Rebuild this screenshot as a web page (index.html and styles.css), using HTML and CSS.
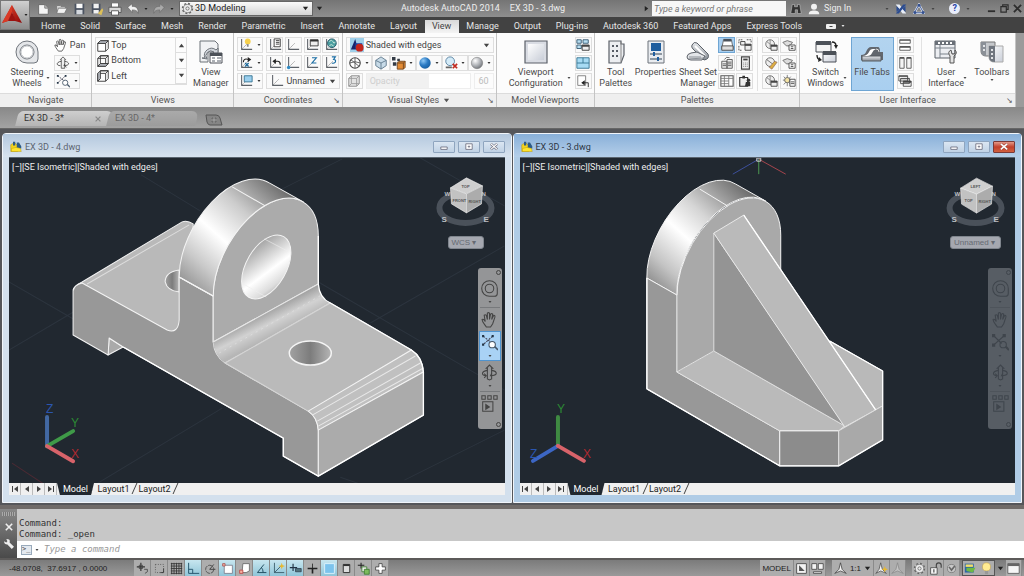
FILE: index.html
```html
<!DOCTYPE html>
<html lang="en">
  <head>
    <meta charset="UTF-8" />
    <meta name="viewport" content="width=device-width, initial-scale=1.0" />
    <title>Autodesk AutoCAD 2014 - EX 3D - 3.dwg</title>
    <link rel="stylesheet" href="styles.css">
  </head>

  <body>
    <!-- icon sprite -->
    <svg class="sprite" aria-hidden="true">
      <defs>
        <linearGradient id="red" x1="0" y1="0" x2="1" y2="1"><stop offset="0" stop-color="#e8472f" /><stop offset="1" stop-color="#8e0a0a" /></linearGradient>
        <linearGradient id="pane" x1="0" y1="0" x2="1" y2="1"><stop offset="0" stop-color="#fff" /><stop offset="1" stop-color="#c9ced8" /></linearGradient>
        <linearGradient id="metal" x1="0" y1="0" x2="0" y2="1"><stop offset="0" stop-color="#e9ebee" /><stop offset="1" stop-color="#858b93" /></linearGradient>
        <radialGradient id="blueball" cx=".35" cy=".3" r=".8"><stop offset="0" stop-color="#8fc8f5" /><stop offset=".5" stop-color="#2b7bc4" /><stop offset="1" stop-color="#155a9c" /></radialGradient>
        <radialGradient id="greyball" cx=".35" cy=".3" r=".8"><stop offset="0" stop-color="#fff" /><stop offset=".6" stop-color="#a5a8ad" /><stop offset="1" stop-color="#66696e" /></radialGradient>
      </defs>
      <symbol id="new" viewBox="0 0 16 16"><path d="M3 3h7l4 4v7H3z" fill="#f4f4f4" stroke="#666" /><path d="M10 3v4h4" fill="#bbb" stroke="#777" /></symbol>
      <symbol id="open" viewBox="0 0 16 16"><path d="M3 12V4h4l1 1h5v2" fill="#d5d5d5" stroke="#777" /><path d="M3 13l2-6h10l-3 6z" fill="#f2f2f2" stroke="#777" /></symbol>
      <symbol id="save" viewBox="0 0 16 16"><path d="M3 2h11v12H3z" fill="#4b5361" /><path d="M5 2h7v5H5z" fill="#fafafa" /><path d="M5 9h7v5H5z" fill="#d4d8de" /></symbol>
      <symbol id="saveas" viewBox="0 0 16 16"><path d="M2 2h10v11H2z" fill="#4b5361" /><path d="M4 2h6v5H4zM4 9h6v4H4z" fill="#f1f1f1" /><path d="M14 7l-5 6 4 2 2-6z" fill="#ddc058" /></symbol>
      <symbol id="print" viewBox="0 0 16 16"><path d="M4 1h8v5H4z" fill="#fff" stroke="#666" /><path d="M1 6h14v6H1z" fill="#d9d9d9" stroke="#555" /><path d="M4 10h8v5H4z" fill="#fff" stroke="#555" /></symbol>
      <symbol id="undo" viewBox="0 0 16 16"><path d="M2 6l5-4v3c5 0 7 2 7 8-1-3-3-4-7-4v3z" fill="#f0f0f0" stroke="#555" stroke-width=".6" /></symbol>
      <symbol id="redo" viewBox="0 0 16 16"><path d="M14 6L9 2v3c-5 0-7 2-7 8 1-3 3-4 7-4v3z" fill="#aaa" stroke="#666" stroke-width=".6" /></symbol>
      <symbol id="gear" viewBox="0 0 16 16"><circle cx="8" cy="8" r="6" fill="#eee" stroke="#666" stroke-width="2" stroke-dasharray="2.4 2.3" /><circle cx="8" cy="8" r="5" fill="#eee" stroke="#777" /><circle cx="8" cy="8" r="2" fill="none" stroke="#666" /></symbol>
      <symbol id="arrow" viewBox="0 0 8 8"><path d="M1 2h6L4 6z" fill="currentColor" /></symbol>
      <symbol id="binoc" viewBox="0 0 16 16"><path d="M3 2h3v3h4V2h3l2 12h-5V9H7v5H1z" fill="#333" stroke="#ccc" stroke-width=".7" /></symbol>
      <symbol id="person" viewBox="0 0 16 16"><circle cx="8" cy="5" r="4" fill="#f1f1f1" /><path d="M1 15c0-4 3-5 7-5s7 1 7 5z" fill="#f1f1f1" /></symbol>
      <symbol id="exchange" viewBox="0 0 16 16"><path d="M1 2h5l9 12h-5z" fill="#e8eef8" /><path d="M15 2h-4L1 14h4z" fill="#2a4c92" /><path d="M2 4l4 4-4 4z" fill="#2a4c92" /><path d="M14 4l-4 4 4 4z" fill="#2a4c92" /></symbol>
      <symbol id="a360" viewBox="0 0 16 16"><path d="M8 2L2 13h12z" fill="none" stroke="#e3e9f5" stroke-width="3" /><path d="M8 2L2 13h12z" fill="none" stroke="#34508f" stroke-width="1.2" /><g fill="#34508f"><circle cx="8" cy="3" r="2" /><circle cx="2.500" cy="12.500" r="2" /><circle cx="13.500" cy="12.500" r="2" /></g></symbol>
      <symbol id="min" viewBox="0 0 10 10"><path d="M1 7h8v2H1z" fill="currentColor" /></symbol>
      <symbol id="restore" viewBox="0 0 10 10"><path d="M3 3V1h6v5H7M1 3h6v6H1z" fill="none" stroke="currentColor" stroke-width="1.3" /></symbol>
      <symbol id="close" viewBox="0 0 10 10"><path d="M1 1l8 8M9 1L1 9" stroke="currentColor" stroke-width="2" /></symbol>

      <symbol id="wheel" viewBox="0 0 24 24"><path d="M12 1a11 11 0 0 0 0 22h7q4 0 4-4v-7A11 11 0 0 0 12 1z" fill="#e4e6e9" stroke="#71767d" /><circle cx="12" cy="12" r="7" fill="#f7f7f7" stroke="#71767d" /><circle cx="12" cy="12" r="6" fill="#fff" stroke="#c4c7cb" /></symbol>
      <symbol id="hand" viewBox="0 0 16 16"><path d="M5 15C3 12 1 10 1 8q1.500-1 3 2L3 4q1-1 2 0l1 4V2q1-1 2 0v6l1-5q1-1 2 0l-1 5 2-4q1.500 0 1 2l-2 6-2 3z" fill="#fff" fill-opacity=".7" stroke="#444" stroke-width=".9" /></symbol>
      <symbol id="orbit" viewBox="0 0 16 16"><path d="M6 14V4H5l3-3 3 3h-1v10z" fill="#eee" stroke="#444" stroke-width=".9" /><path d="M6 6C0 7 0 11 5 11M10 6c6 1 6 5-1 5l1-2M10 11l2 2" fill="none" stroke="#444" /></symbol>
      <symbol id="zoomx" viewBox="0 0 16 16"><path d="M2 2l10 8M11 2L2 10" stroke="#445" stroke-dasharray="2 1" /><g fill="#234"><path d="M1 1h2v2H1zM10 1h2v2h-2zM1 9h2v2H1z" /></g><circle cx="10.500" cy="10" r="3" fill="#fff" stroke="#456" /><path d="M13 12l3 3" stroke="#456" stroke-width="1.500" /></symbol>

      <!-- outline versions for the navigation bar -->
      <symbol id="n-wheel" viewBox="0 0 24 24"><path d="M12 1a11 11 0 0 0 0 22h7q4 0 4-4v-7A11 11 0 0 0 12 1z" fill="none" stroke="currentColor" stroke-width="1.500" /><circle cx="12" cy="12" r="6" fill="none" stroke="currentColor" stroke-width="1.500" /></symbol>
      <symbol id="n-hand" viewBox="0 0 16 16"><path d="M5 15C3 12 1 10 1 8q1.500-1 3 2L3 4q1-1 2 0l1 4V2q1-1 2 0v6l1-5q1-1 2 0l-1 5 2-4q1.500 0 1 2l-2 6-2 3z" fill="none" stroke="currentColor" /></symbol>
      <symbol id="n-orbit" viewBox="0 0 16 16"><path d="M6 14V4H5l3-3 3 3h-1v10l-2 1z" fill="none" stroke="currentColor" /><path d="M6 6C0 7 0 11 5 11M10 6c6 1 6 5-1 5l1-2M3 9l2 2-2 2" fill="none" stroke="currentColor" /></symbol>
      <symbol id="n-zoom" viewBox="0 0 16 16"><path d="M2 2l7 7M11 2L2 10" fill="none" stroke="currentColor" stroke-width="1.200" /><path d="M0 0h3v3H0zM10 0h3v3h-3zM0 9h3v3H0z" fill="currentColor" /><circle cx="10.500" cy="10" r="3" fill="none" stroke="currentColor" /><path d="M13 12l3 3" stroke="currentColor" stroke-width="2" /></symbol>

      <symbol id="cube-t" viewBox="0 0 16 16"><path d="M2 5h9v9H2zM5 2h9v9l-3 3M2 5l3-3M11 5l3-3" fill="#fff" stroke="#333" /><path d="M2 5l3-3h9l-3 3z" fill="#b9bdc4" stroke="#333" /></symbol>
      <symbol id="cube-b" viewBox="0 0 16 16"><path d="M2 5h9v9H2zM5 2h9v9l-3 3M2 5l3-3h9l-3 3M5 2v9h9M5 11l-3 3" fill="none" stroke="#333" /><path d="M2 14l3-3h9l-3 3z" fill="#b9bdc4" stroke="#333" /></symbol>
      <symbol id="cube-l" viewBox="0 0 16 16"><path d="M2 5h9v9H2zM5 2h9v9l-3 3M11 5l3-3H5" fill="none" stroke="#333" /><path d="M2 5l3-3v9l-3 3z" fill="#b9bdc4" stroke="#333" /></symbol>
      <symbol id="viewmgr" viewBox="0 0 24 24"><path d="M1 1h15l3 3v8H9v10H1z" fill="#f1f2f4" stroke="#6d7279" /><path d="M3 18h3a7 7 0 0 1 11-8l2-2v7l-6-1 2-2a5 5 0 0 0-7 7z" fill="#d0d4da" stroke="#6d7279" /><path d="M11 13h12v10H11z" fill="#fff" stroke="#4c5158" /><path d="M11 13h12v3H11z" fill="#4c5158" /><path d="M13 18h3M18 18h4M13 21h3M18 21h4" stroke="#59606a" /></symbol>
      <symbol id="ucs" viewBox="0 0 16 16"><path d="M3 1v12h12" fill="none" stroke="#5d6268" stroke-width="1.200" /><path d="M3 13l7-7" stroke="#888" stroke-dasharray="2 1" /></symbol>
      <symbol id="ucs-bulb" viewBox="0 0 16 16"><use href="#ucs" /><circle cx="10" cy="4" r="3.300" fill="#f6d04c" /><path d="M9 7h2v3H9z" fill="#888" /></symbol>
      <symbol id="ucs-rot" viewBox="0 0 16 16"><use href="#ucs" /><path d="M5 7c0-4 3-4 6-3" fill="none" stroke="#222" stroke-width="1.300" /><path d="M10 1l4 3-4 3z" fill="#222" /><path d="M7 8l4 4M11 8l-4 4" stroke="#1f6b9b" stroke-width="1.500" /></symbol>
      <symbol id="ucs-view" viewBox="0 0 16 16"><use href="#ucs" /><path d="M6 2h9v7H6z" fill="#9bd0ef" stroke="#31708f" /></symbol>
      <symbol id="ucs-list" viewBox="0 0 16 16"><use href="#ucs" /><path d="M7 1h7v9H7z" fill="#fff" stroke="#333" /><path d="M9 3h4M9 5h4M9 7h4" stroke="#333" /></symbol>
      <symbol id="ucs-back" viewBox="0 0 16 16"><use href="#ucs" /><path d="M8 6h3q3 0 3 4" fill="none" stroke="#222" stroke-width="1.400" /><path d="M9 3L5 6l4 3z" fill="#222" /></symbol>
      <symbol id="ucs-named" viewBox="0 0 16 16"><use href="#ucs" /><path d="M6 2h9v7H6z" fill="#eee" stroke="#333" /><path d="M6 2h9v2H6z" fill="#333" /></symbol>
      <symbol id="ucs-world" viewBox="0 0 16 16"><use href="#ucs" /><circle cx="9" cy="6" r="5" fill="#4a9ea0" stroke="#256" /><path d="M6 4q3-3 4 0t3 1M6 9q2-3 5 0" fill="none" stroke="#d8efe0" /></symbol>
      <symbol id="ucs-orig" viewBox="0 0 16 16"><use href="#ucs" /><circle cx="3" cy="13" r="2" fill="#318bc4" /></symbol>
      <symbol id="ucs-z" viewBox="0 0 16 16"><use href="#ucs" /><path d="M8 2h5L8 8h5" fill="none" stroke="#1c6fa5" stroke-width="1.300" /></symbol>
      <symbol id="ucs-3" viewBox="0 0 16 16"><use href="#ucs" /><path d="M9 1h4l-2 3q3 0 2 3-2 2-4 1" fill="none" stroke="#1c6fa5" stroke-width="1.300" /></symbol>
      <symbol id="shaded" viewBox="0 0 16 16"><path d="M0 0h16v16H0z" fill="#9fd0ea" /><path d="M1 13L6 1l3 12z" fill="#16246b" /><path d="M6 6h8v6H6z" fill="#1c3e9c" /><circle cx="11" cy="11" r="4.500" fill="#c3241c" /></symbol>
      <symbol id="wire" viewBox="0 0 16 16"><circle cx="8" cy="8" r="6" fill="#fff" stroke="#444" stroke-width="1.200" /><path d="M3 4l10 8M8 2v12M2 8q6-3 12 0" fill="none" stroke="#555" /></symbol>
      <symbol id="cubeico" viewBox="0 0 16 16"><path d="M8 1l6 4v6l-6 4-6-4V5z" fill="#c8dbe8" stroke="#5d7689" /><path d="M2 5l6 3 6-3M8 8v7" fill="none" stroke="#5d7689" /></symbol>
      <symbol id="material" viewBox="0 0 16 16"><path d="M0 1h4v4H0zM6 3h3v3H6zM1 7h4v4H1z" fill="#333b46" /><path d="M6 8l2-2h7v7l-2 2H6z" fill="#e38b34" stroke="#70441b" /><path d="M6 8h7v7M13 8l2-2" fill="none" stroke="#70441b" /></symbol>
      <symbol id="ball" viewBox="0 0 16 16"><circle cx="8" cy="8" r="6.500" fill="url(#blueball)" /></symbol>
      <symbol id="ballx" viewBox="0 0 16 16"><circle cx="7" cy="6" r="5" fill="#d4ebf8" stroke="#527d9c" /><path d="M2 13h7" stroke="#666" stroke-width="2" /><path d="M10 9l5 5M15 9l-5 5" stroke="#c22b20" stroke-width="2" /></symbol>
      <symbol id="greyb" viewBox="0 0 16 16"><circle cx="8" cy="8" r="6.500" fill="url(#greyball)" stroke="#777" stroke-width=".6" /></symbol>
      <symbol id="xray" viewBox="0 0 16 16"><path d="M2 5l3-3h9v9l-3 3H2z" fill="#e3e3e3" stroke="#888" /><path d="M2 5h9v9M11 5l3-3M5 2v9h9M5 11l-3 3" fill="none" stroke="#999" /></symbol>
      <symbol id="vport" viewBox="0 0 24 24"><path d="M1 1h22v22H1z" fill="#d9dce3" stroke="#5a5f68" stroke-width="1.200" /><path d="M4 4h16v16H4z" fill="url(#pane)" /></symbol>
      <symbol id="vp-named" viewBox="0 0 16 16"><path d="M1 2h5v4H1zM8 2h6v4H8zM1 8h5v4H1z" fill="#b9dff2" stroke="#31556d" /><path d="M7 8h8v6H7z" fill="#eee" stroke="#333" /><path d="M7 8h8v2H7z" fill="#444" /></symbol>
      <symbol id="vp-join" viewBox="0 0 16 16"><path d="M1 2h14v12H1z" fill="#a7dbf4" stroke="#31708f" /><path d="M1 8h14M8 2v6" stroke="#31708f" /></symbol>
      <symbol id="vp-rest" viewBox="0 0 16 16"><path d="M2 2h9v11H2z" fill="#fff" stroke="#777" /><path d="M14 15v-5H9" fill="none" stroke="#222" /><path d="M10 7l-4 3 4 3z" fill="#222" /></symbol>
      <symbol id="toolpal" viewBox="0 0 24 24"><path d="M5 1h12v3h3v11l-3 8H5z" fill="#eceef1" stroke="#5b6068" stroke-width="1.200" /><path d="M17 2v20" stroke="#888" /><path d="M8 5h2v2H8zM12 5h2v2h-2zM8 10h2v2H8zM12 10h2v2h-2zM8 15h2v2H8zM12 15h2v2h-2z" fill="#565c65" /></symbol>
      <symbol id="props" viewBox="0 0 24 24"><path d="M4 1h16v22H4z" fill="#e9ecf0" stroke="#6c727b" /><path d="M7 3h10v8H7z" fill="#1f5e9e" /><path d="M6 14h12M6 19h12" stroke="#345" /><path d="M9 12h2v4H9zM13 17h2v4h-2z" fill="#1f5e9e" /></symbol>
      <symbol id="sheet" viewBox="0 0 24 24"><path d="M6 5q2-4 5-2l11 11q2 5-4 6L7 9q-2-2-1-4z" fill="url(#metal)" stroke="#5c6168" /><path d="M9 6l10 10" stroke="#fff" stroke-width="2" /><path d="M1 17q0-3 4-4l6-1 8 4-3 4H5q-4 0-4-3z" fill="#e4e6e9" stroke="#5c6168" /><path d="M3 17h12M2 19l16-1" stroke="#8b9096" /></symbol>
      <symbol id="win" viewBox="0 0 16 16"><path d="M4 2h9l2 10H2z" fill="#fff" stroke="#666" /><path d="M4 1h9v3H4z" fill="#4b5159" /><path d="M2 9h13v5H2z" fill="#ddd" stroke="#444" /></symbol>
      <symbol id="dcenter" viewBox="0 0 16 16"><path d="M1 6V2h5M10 2h5v3M1 9v5h4" fill="none" stroke="#444" stroke-dasharray="2 1" /><path d="M3 4h5v4H3zM8 7h7v7H8z" fill="#eee" stroke="#444" /><path d="M8 7h7v2H8z" fill="#444" /></symbol>
      <symbol id="docs" viewBox="0 0 16 16"><path d="M2 6h6v8H2zM8 4h6v10H8z" fill="#eee" stroke="#555" /><path d="M9 7h4M9 9h4M9 11h4M3 9h4M3 11h4M5 4q2-4 6-2" fill="none" stroke="#555" /></symbol>
      <symbol id="calc" viewBox="0 0 16 16"><path d="M4 1h9v14H4z" fill="#eee" stroke="#444" stroke-width="1.300" /><path d="M6 4h5" stroke="#444" stroke-width="2" /><path d="M6 8h5M6 10h5M6 12h5" stroke="#777" stroke-dasharray="1 1" /></symbol>
      <symbol id="table" viewBox="0 0 16 16"><path d="M1 2h14v12H1z" fill="#fff" stroke="#555" stroke-width="1.200" /><path d="M1 5h14M1 8h9M1 11h9M5 2v12M10 2v12" stroke="#777" /></symbol>
      <symbol id="markup" viewBox="0 0 16 16"><path d="M2 4h9v10H2z" fill="#eee" stroke="#333" stroke-width="1.300" /><path d="M5 2h3v3H5zM9 9h5v5H8z" fill="#333" /><circle cx="12" cy="7" r="2" fill="#333" /></symbol>
      <symbol id="light" viewBox="0 0 16 16"><circle cx="7" cy="7" r="5" fill="#eee" stroke="#666" /><path d="M3 4l8 6M7 2v9" stroke="#888" /><path d="M8 8h7v6H8z" fill="#eee" stroke="#444" /><path d="M8 8h7v2H8z" fill="#444" /></symbol>
      <symbol id="lamp" viewBox="0 0 16 16"><path d="M1 5l5-2 6 2-3 4H5z" fill="#ddd" stroke="#666" /><path d="M8 8h7v6H8z" fill="#fff" stroke="#444" /><path d="M10 10h3M10 12h3" stroke="#444" /></symbol>
      <symbol id="brush" viewBox="0 0 16 16"><circle cx="7" cy="7" r="5" fill="#eee" stroke="#666" /><path d="M3 4l8 6" stroke="#666" /><path d="M15 7l-6 8-3-2 6-7z" fill="#dcae44" stroke="#755" stroke-width=".6" /></symbol>
      <symbol id="sun" viewBox="0 0 16 16"><path d="M6 1v13M1 7h11M2 3l8 9M10 3l-8 9" stroke="#777" /><circle cx="6" cy="7" r="3" fill="#f4e3a4" stroke="#666" /><path d="M9 6h6v8H9z" fill="#fff" stroke="#444" /><path d="M10 9h4M10 11h4" stroke="#444" /></symbol>
      <symbol id="switchw" viewBox="0 0 24 24"><path d="M2 2h15v10H2z" fill="#f4f4f4" stroke="#4c5158" /><path d="M2 1h15v4H2z" fill="#4c5158" /><path d="M9 12h13v10H9z" fill="url(#pane)" stroke="#4c5158" /><path d="M9 11h13v4H9z" fill="#4c5158" /><path d="M18 2q4 0 4 4M3 15q0 4 3 5" fill="none" stroke="#222" stroke-width="1.300" /><path d="M20 5h4l-2 4zM5 17l3 3-4 2z" fill="#222" /></symbol>
      <symbol id="filetabs" viewBox="0 0 24 24"><path d="M1 20v-5q4 0 5-3 2-5 5-5h7q2 0 2 5h3v8z" fill="#62676e" /><path d="M2 21v-5h19v5z" fill="url(#metal)" stroke="#555a61" /><path d="M2 16q5 0 7-4 1-3 4-3h3q-3 1-4 4-1 3-5 3z" fill="#fff" /><path d="M16 9q3 0 3 3" fill="none" stroke="#ddd" /></symbol>
      <symbol id="tileh" viewBox="0 0 16 16"><path d="M2 2h12v4H2zM2 10h12v4H2z" fill="#fff" stroke="#555" /><path d="M2 2h12v1H2zM2 9h12v2H2z" fill="#555" /></symbol>
      <symbol id="tilev" viewBox="0 0 16 16"><path d="M2 2h5v12H2zM10 2h5v12h-5z" fill="#f4f4f4" stroke="#555" /><path d="M2 1h5v2H2zM10 1h5v2h-5z" fill="#555" /></symbol>
      <symbol id="cascade" viewBox="0 0 16 16"><path d="M1 2h10v6H1zM3 5h10v6H3zM6 8h9v6H6z" fill="#fff" stroke="#444" /><path d="M1 2h10v1H1zM3 5h10v1H3zM6 8h9v2H6z" fill="#444" /></symbol>
      <symbol id="ui" viewBox="0 0 24 24"><path d="M1 1h20v17H1z" fill="#eceef2" stroke="#5b6068" /><path d="M1 1h20v4H1z" fill="#6a7078" /><path d="M4 3h2M8 3h2M12 3h2M16 3h2" stroke="#fff" stroke-width="2" /><path d="M1 8h20M6 5v13M6 14h15" stroke="#7b828b" /><path d="M17 10q-4 2-1 6v7h4v-7q4-3 1-6v4h-3z" fill="#e4e4e4" stroke="#555" /></symbol>
      <symbol id="toolbars" viewBox="0 0 24 24"><path d="M1 2h14v14H6q-5 0-5-5z" fill="#c5c8cc" stroke="#777" /><path d="M1 2h5v14q-5 0-5-5z" fill="#8b9097" /><path d="M9 6h14v16H14q-5 0-5-5z" fill="url(#pane)" stroke="#aaa" /><path d="M9 6h6v16q-6 0-6-5z" fill="#70767f" /><path d="M11 9h2v2h-2zM11 13h2v2h-2zM11 17h2v2h-2zM3 5h2v2H3zM3 9h2v2H3z" fill="#e1e3e6" /></symbol>
      <symbol id="dwg" viewBox="0 0 16 16"><path d="M1 5l5-3 4 4v8H1z" fill="#f4d31d" stroke="#a98a0c" stroke-width=".6" /><path d="M4 1h3v5H4zM9 2h3l3 5v3H9z" fill="#2c5a86" /><path d="M2 10q6-3 12 0l1 4H2z" fill="#ffe42e" stroke="#b4960f" stroke-width=".6" /></symbol>
      <symbol id="motion" viewBox="0 0 20 20"><path d="M1 1h4v4H1zM8 1h4v4H8zM15 1h4v4h-4zM2 8h12v11H2z" fill="none" stroke="currentColor" stroke-width="1.200" /><path d="M5 10l6 4-6 4z" fill="currentColor" /></symbol>
      <symbol id="wrench" viewBox="0 0 10 10"><path d="M1 3l2 1 1-1-1-2q4 0 3 3l4 4-2 2-4-4q-3 0-3-3z" fill="#eee" /></symbol>

      <symbol id="s-infer" viewBox="0 0 16 16"><path d="M6 1v10M1 6h10" stroke="#333" stroke-width="1.400" /><path d="M4 4h4v4H4zM10 9h4v3l-3 2" fill="none" stroke="#444" /></symbol>
      <symbol id="s-snap" viewBox="0 0 16 16"><path d="M3 3h10v10H3z" fill="none" stroke="#444" stroke-dasharray="1 2" /><path d="M9 13h4V8" stroke="#333" fill="none" /></symbol>
      <symbol id="s-grid" viewBox="0 0 16 16"><path d="M1 2h14M1 5h14M1 8h14M1 11h14M1 14h14M2 1v14M5 1v14M8 1v14M11 1v14M14 1v14" stroke="#333" /></symbol>
      <symbol id="s-ortho" viewBox="0 0 16 16"><path d="M2 1v13h13M2 9h5v5" fill="none" stroke="#27566d" stroke-width="1.200" /></symbol>
      <symbol id="s-polar" viewBox="0 0 16 16"><circle cx="7" cy="9" r="5" fill="none" stroke="#555" stroke-width="1.200" stroke-dasharray="6 1" /><path d="M7 9h7M7 9l5-6" stroke="#444" stroke-width="1.200" /></symbol>
      <symbol id="s-osnap" viewBox="0 0 16 16"><path d="M4 4h10v10H4z" fill="#fff" stroke="#778" /><path d="M2 2h3v3H2z" fill="#f5b2a2" stroke="#a55" /></symbol>
      <symbol id="s-3dosnap" viewBox="0 0 16 16"><path d="M6 2h8v9l-4 2H5z" fill="#fff" stroke="#666" /><path d="M2 10h4v4H2z" fill="#f5b2a2" stroke="#b44" /></symbol>
      <symbol id="s-otrack" viewBox="0 0 16 16"><path d="M11 3L3 13h11M8 7q2 2 2 6" fill="none" stroke="#234f63" stroke-width="1.200" /></symbol>
      <symbol id="s-ducs" viewBox="0 0 16 16"><path d="M3 1v12h12M3 13l8-8" fill="none" stroke="#30515f" /><path d="M12 1l1 3 3 1-3 1-1 3-1-3-3-1 3-1z" fill="#e9b92d" /></symbol>
      <symbol id="s-dyn" viewBox="0 0 16 16"><path d="M5 2v9M1 7h9" stroke="#234" stroke-width="1.400" /><path d="M8 8h7v4H8z" fill="#52747d" stroke="#345" /></symbol>
      <symbol id="s-lwt" viewBox="0 0 16 16"><path d="M8 2v6" stroke="#222" /><path d="M2 8h12M8 8v6" stroke="#222" stroke-width="2" /></symbol>
      <symbol id="s-tpy" viewBox="0 0 16 16"><path d="M2 2h12v12H2z" fill="#7cc3ec" stroke="#e6f6ff" /></symbol>
      <symbol id="s-qp" viewBox="0 0 16 16"><path d="M4 3h8v10H4z" fill="#ddd" stroke="#333" stroke-width="1.200" /><path d="M4 4h8" stroke="#333" stroke-width="2" /></symbol>
      <symbol id="s-sc" viewBox="0 0 16 16"><path d="M1 4h8M5 1v7" stroke="#222" stroke-width="1.300" /><path d="M6 6h6v6H6z" fill="#eee" stroke="#3a7d2c" /><path d="M9 9h6v6H9z" fill="#7dbb5d" stroke="#3a7d2c" /></symbol>
      <symbol id="s-am" viewBox="0 0 16 16"><path d="M6 2h4v4h4v4h-4v4H6v-4H2V6h4z" fill="#fff" stroke="#444" /></symbol>
      <symbol id="s-paper" viewBox="0 0 16 16"><path d="M2 2h12v12H2z" fill="#f4f4f4" stroke="#555" stroke-width="1.200" /><path d="M5 4v7h7z" fill="#555" /></symbol>
      <symbol id="s-qv" viewBox="0 0 16 16"><path d="M1 2h6v7H1zM9 2h6v7H9zM3 12h10v2H3z" fill="#f4f4f4" stroke="#444" /></symbol>
      <symbol id="s-anno" viewBox="0 0 16 16"><path d="M8 1l2 8 5 5-7-3-7 3 5-5z" fill="#f5f5f5" stroke="#444" /></symbol>
      <symbol id="s-annostar" viewBox="0 0 16 16"><path d="M7 1l2 8 5 5-7-3-6 3 4-5z" fill="#f5f5f5" stroke="#555" /><path d="M12 5l1 3 3 1-3 1-1 3-1-3-3-1 3-1z" fill="#e9b92d" /></symbol>
      <symbol id="s-annooff" viewBox="0 0 16 16"><path d="M8 1l2 8 5 5-7-3-7 3 5-5z" fill="#c4c4c4" stroke="#8a8a8a" /></symbol>
      <symbol id="s-lock" viewBox="0 0 16 16"><path d="M2 7h8v8H2z" fill="#f4f4f4" stroke="#444" /><path d="M9 7V4q0-3 3-3t3 3v3M6 9v4" fill="none" stroke="#444" stroke-width="1.400" /></symbol>
      <symbol id="s-hw" viewBox="0 0 16 16"><circle cx="8" cy="8" r="5" fill="#c9c9c9" stroke="#777" /><path d="M5 6l3 4 4-5" fill="none" stroke="#666" stroke-width="2" /></symbol>
      <symbol id="s-iso" viewBox="0 0 16 16"><path d="M1 2h11v11H1z" fill="#2d67a5" /><path d="M3 7h11l-3 6-8-2z" fill="#6dba45" /><path d="M2 3h9v3H2z" fill="#f6df67" /></symbol>
      <symbol id="s-bulb" viewBox="0 0 16 16"><circle cx="8" cy="6" r="5" fill="#ffeb92" stroke="#bb9840" stroke-width=".6" /><path d="M6 11h4v4H6z" fill="#999" /></symbol>
      <symbol id="s-clean" viewBox="0 0 16 16"><path d="M1 2h14v12H1z" fill="#f6f6f6" stroke="#555" /><path d="M1 2h14v3H1z" fill="#666" /></symbol>
    </svg>

    <header class="top">
      <button class="app-btn" aria-label="Application menu">
        <svg class="app-logo" viewBox="0 0 20 20"><path d="M10 0l10 18-7-2-3-9-4 9-6 2z" fill="url(#red)" /><path d="M10 0v8l-4 8-6 2z" fill="#d93a26" /><path d="M10 7l4 9H6z" fill="#9c1210" /></svg>
        <svg class="tiny"><use href="#arrow" /></svg>
      </button>
      <div class="titlebar">
        <div class="qat">
          <button aria-label="New"><svg><use href="#new" /></svg></button>
          <button aria-label="Open"><svg><use href="#open" /></svg></button>
          <button aria-label="Save"><svg><use href="#save" /></svg></button>
          <button aria-label="Save As"><svg><use href="#saveas" /></svg></button>
          <button aria-label="Plot"><svg><use href="#print" /></svg></button>
          <button aria-label="Undo"><svg><use href="#undo" /></svg></button>
          <svg class="tiny"><use href="#arrow" /></svg>
          <button aria-label="Redo"><svg><use href="#redo" /></svg></button>
          <svg class="tiny"><use href="#arrow" /></svg>
        </div>
        <div class="workspace-pick">
          <svg class="ico"><use href="#gear" /></svg>
          <select aria-label="Workspace"><option>3D Modeling</option></select>
          <svg class="caret"><use href="#arrow" /></svg>
        </div>
        <svg class="caret"><use href="#arrow" /></svg>
        <div class="app-title"><span>Autodesk AutoCAD 2014</span><span>EX 3D - 3.dwg</span></div>
        <svg class="caret side"><use href="#arrow" /></svg>
        <input class="search" type="text" aria-label="Search help" placeholder="Type a keyword or phrase" />
        <div class="info">
          <button aria-label="Search"><svg><use href="#binoc" /></svg></button>
          <button class="signin"><svg><use href="#person" /></svg>Sign In</button>
          <svg class="tiny"><use href="#arrow" /></svg>
          <button aria-label="Exchange"><svg><use href="#exchange" /></svg></button>
          <button aria-label="Autodesk 360"><svg><use href="#a360" /></svg></button>
          <svg class="tiny"><use href="#arrow" /></svg>
          <button class="help">?</button>
          <svg class="tiny"><use href="#arrow" /></svg>
        </div>
        <div class="sys">
          <button aria-label="Minimize"><svg><use href="#min" /></svg></button>
          <button aria-label="Restore"><svg><use href="#restore" /></svg></button>
          <button aria-label="Close"><svg><use href="#close" /></svg></button>
        </div>
      </div>
      <nav class="menu">
        <button>Home</button>
        <button>Solid</button>
        <button>Surface</button>
        <button>Mesh</button>
        <button>Render</button>
        <button>Parametric</button>
        <button>Insert</button>
        <button>Annotate</button>
        <button>Layout</button>
        <button class="active">View</button>
        <button>Manage</button>
        <button>Output</button>
        <button>Plug-ins</button>
        <button>Autodesk 360</button>
        <button>Featured Apps</button>
        <button>Express Tools</button>
        <button class="cam" aria-label="Minimize ribbon"><i></i><svg class="tiny"><use href="#arrow" /></svg></button>
      </nav>
    </header>

    <section class="ribbon">
      <div class="panel p-nav">
        <div class="panel-body">
          <button class="big with-caret"><svg><use href="#wheel" /></svg>Steering<br />Wheels<svg class="tiny"><use href="#arrow" /></svg></button>
          <div class="stack">
            <button class="line"><svg class="ico"><use href="#hand" /></svg>Pan</button>
            <button class="sm split" aria-label="Orbit"><svg class="ico"><use href="#orbit" /></svg><svg class="tiny"><use href="#arrow" /></svg></button>
            <button class="sm split" aria-label="Extents"><svg class="ico"><use href="#zoomx" /></svg><svg class="tiny"><use href="#arrow" /></svg></button>
          </div>
        </div>
        <div class="panel-title">Navigate</div>
      </div>

      <div class="panel p-views">
        <div class="panel-body">
          <div class="view-list">
            <div class="view-items">
              <button><svg class="ico"><use href="#cube-t" /></svg>Top</button>
              <button><svg class="ico"><use href="#cube-b" /></svg>Bottom</button>
              <button><svg class="ico"><use href="#cube-l" /></svg>Left</button>
            </div>
            <div class="view-scroll">
              <button aria-label="Up"><svg class="caret flip"><use href="#arrow" /></svg></button>
              <button aria-label="Down"><svg class="caret"><use href="#arrow" /></svg></button>
              <button aria-label="More"><svg class="caret"><use href="#arrow" /></svg></button>
            </div>
          </div>
          <button class="big"><svg><use href="#viewmgr" /></svg>View<br />Manager</button>
        </div>
        <div class="panel-title">Views</div>
      </div>

      <div class="panel p-coord">
        <div class="panel-body">
          <div class="stack">
            <button class="sm split" aria-label="UCS icon"><svg class="ico"><use href="#ucs-bulb" /></svg><svg class="tiny"><use href="#arrow" /></svg></button>
            <button class="sm split" aria-label="Rotate X"><svg class="ico"><use href="#ucs-rot" /></svg><svg class="tiny"><use href="#arrow" /></svg></button>
            <button class="sm split" aria-label="UCS view"><svg class="ico"><use href="#ucs-view" /></svg><svg class="tiny"><use href="#arrow" /></svg></button>
          </div>
          <div class="coord-grid">
            <button class="sm" aria-label="Properties"><svg class="ico"><use href="#ucs-list" /></svg></button>
            <button class="sm" aria-label="UCS"><svg class="ico"><use href="#ucs" /></svg></button>
            <button class="sm" aria-label="Named UCS"><svg class="ico"><use href="#ucs-named" /></svg></button>
            <button class="sm" aria-label="World"><svg class="ico"><use href="#ucs-world" /></svg></button>
            <button class="sm" aria-label="Previous"><svg class="ico"><use href="#ucs-back" /></svg></button>
            <button class="sm" aria-label="Origin"><svg class="ico"><use href="#ucs-orig" /></svg></button>
            <button class="sm" aria-label="Z-axis"><svg class="ico"><use href="#ucs-z" /></svg></button>
            <button class="sm" aria-label="3-point"><svg class="ico"><use href="#ucs-3" /></svg></button>
            <div class="pick"><svg class="ico"><use href="#ucs" /></svg><select aria-label="Named UCS"><option>Unnamed</option></select><svg class="caret"><use href="#arrow" /></svg></div>
          </div>
        </div>
        <div class="panel-title">Coordinates<i class="launch">&#8600;</i></div>
      </div>

      <div class="panel p-style">
        <div class="panel-body column">
          <div class="pick"><svg class="ico"><use href="#shaded" /></svg><select aria-label="Visual style"><option>Shaded with edges</option></select><svg class="caret"><use href="#arrow" /></svg></div>
          <div class="style-row">
            <button class="sm split" aria-label="Edges"><svg class="ico"><use href="#wire" /></svg><svg class="tiny"><use href="#arrow" /></svg></button>
            <button class="sm" aria-label="Faces"><svg class="ico"><use href="#cubeico" /></svg></button>
            <button class="sm split" aria-label="Materials"><svg class="ico"><use href="#material" /></svg><svg class="tiny"><use href="#arrow" /></svg></button>
            <button class="sm split" aria-label="Face style"><svg class="ico"><use href="#ball" /></svg><svg class="tiny"><use href="#arrow" /></svg></button>
            <button class="sm split" aria-label="Shadows"><svg class="ico"><use href="#ballx" /></svg><svg class="tiny"><use href="#arrow" /></svg></button>
            <button class="sm split" aria-label="Lighting"><svg class="ico"><use href="#greyb" /></svg><svg class="tiny"><use href="#arrow" /></svg></button>
          </div>
          <div class="opacity-row">
            <button class="sm" aria-label="X-ray"><svg class="ico"><use href="#xray" /></svg></button>
            <div class="opacity"><label for="opacity">Opacity</label><input id="opacity" type="range" value="60" disabled /></div>
            <input class="opacity-val" type="text" aria-label="Opacity value" value="60" disabled />
          </div>
        </div>
        <div class="panel-title">Visual Styles<svg class="caret"><use href="#arrow" /></svg><i class="launch">&#8600;</i></div>
      </div>

      <div class="panel p-vports">
        <div class="panel-body">
          <button class="big with-caret"><svg><use href="#vport" /></svg>Viewport<br />Configuration<svg class="tiny"><use href="#arrow" /></svg></button>
          <div class="stack">
            <button class="sm" aria-label="Named"><svg class="ico"><use href="#vp-named" /></svg></button>
            <button class="sm" aria-label="Join"><svg class="ico"><use href="#vp-join" /></svg></button>
            <button class="sm" aria-label="Restore viewport"><svg class="ico"><use href="#vp-rest" /></svg></button>
          </div>
        </div>
        <div class="panel-title">Model Viewports</div>
      </div>

      <div class="panel p-pal">
        <div class="panel-body">
          <button class="big"><svg><use href="#toolpal" /></svg>Tool<br />Palettes</button>
          <button class="big"><svg><use href="#props" /></svg>Properties</button>
          <button class="big"><svg><use href="#sheet" /></svg>Sheet Set<br />Manager</button>
          <div class="pair">
            <button class="sm on" aria-label="Command line"><svg class="ico"><use href="#win" /></svg></button>
            <button class="sm" aria-label="Design Center"><svg class="ico"><use href="#dcenter" /></svg></button>
            <button class="sm" aria-label="External references"><svg class="ico"><use href="#docs" /></svg></button>
            <button class="sm" aria-label="Calculator"><svg class="ico"><use href="#calc" /></svg></button>
            <button class="sm" aria-label="DB connect"><svg class="ico"><use href="#table" /></svg></button>
            <button class="sm" aria-label="Markup set"><svg class="ico"><use href="#markup" /></svg></button>
          </div>
          <div class="pair ruled">
            <button class="sm" aria-label="Materials browser"><svg class="ico"><use href="#light" /></svg></button>
            <button class="sm" aria-label="Lights"><svg class="ico"><use href="#lamp" /></svg></button>
            <button class="sm" aria-label="Materials editor"><svg class="ico"><use href="#brush" /></svg></button>
            <button class="sm" aria-label="Render settings"><svg class="ico"><use href="#lamp" /></svg></button>
            <button class="sm" aria-label="Visual styles"><svg class="ico"><use href="#light" /></svg></button>
            <button class="sm" aria-label="Sun properties"><svg class="ico"><use href="#sun" /></svg></button>
          </div>
        </div>
        <div class="panel-title">Palettes</div>
      </div>

      <div class="panel p-ui">
        <div class="panel-body">
          <button class="big with-caret"><svg><use href="#switchw" /></svg>Switch<br />Windows<svg class="tiny"><use href="#arrow" /></svg></button>
          <button class="big on"><svg><use href="#filetabs" /></svg>File Tabs</button>
          <div class="stack">
            <button class="sm" aria-label="Tile horizontally"><svg class="ico"><use href="#tileh" /></svg></button>
            <button class="sm" aria-label="Tile vertically"><svg class="ico"><use href="#tilev" /></svg></button>
            <button class="sm" aria-label="Cascade"><svg class="ico"><use href="#cascade" /></svg></button>
          </div>
          <span class="rule"></span>
          <button class="big with-caret"><svg><use href="#ui" /></svg>User<br />Interface<svg class="tiny"><use href="#arrow" /></svg></button>
          <button class="big"><svg><use href="#toolbars" /></svg>Toolbars<svg class="tiny"><use href="#arrow" /></svg></button>
        </div>
        <div class="panel-title">User Interface<i class="launch">&#8600;</i></div>
      </div>
    </section>

    <div class="file-tabs">
      <button class="file-tab active"><span>EX 3D - 3*</span><svg><use href="#close" /></svg></button>
      <button class="file-tab"><span>EX 3D - 4*</span></button>
      <button class="new-tab" aria-label="New tab"><svg viewBox="0 0 18 12"><path d="M1 1h10q3 0 4 3l2 7H5q-2 0-3-3z" fill="#858585" stroke="#555" /><path d="M9 3v6M6 6h6" stroke="#666" stroke-width="3" /><path d="M9 3v6M6 6h6" stroke="#aaa" /></svg></button>
    </div>

    <main class="mdi">
      <section class="window">
        <div class="win-title">
          <svg class="ico"><use href="#dwg" /></svg>
          <span>EX 3D - 4.dwg</span>
          <button aria-label="Minimize"><svg viewBox="0 0 10 10"><path d="M1 5h8v3H1z" fill="#fff" stroke="#667" /></svg></button>
          <button aria-label="Maximize"><svg viewBox="0 0 10 10"><path d="M1 1h8v7H1zM4 4h2v1H4z" fill="#fff" stroke="#667" /></svg></button>
          <button aria-label="Close"><svg viewBox="0 0 10 10"><path d="M1 1l8 7M9 1L1 8" stroke="#667" stroke-width="3" /><path d="M1 1l8 7M9 1L1 8" stroke="#fff" stroke-width="1.500" /></svg></button>
        </div>
        <div class="canvas">
          <svg class="scene" viewBox="9 157 495 327" preserveAspectRatio="xMidYMid slice">
            <defs>
              <linearGradient id="band1" gradientUnits="userSpaceOnUse" x1="190" y1="296" x2="284" y2="190"><stop offset="0" stop-color="#8a8a8a" /><stop offset=".22" stop-color="#c9c9c9" /><stop offset=".45" stop-color="#fff" /><stop offset=".7" stop-color="#ccc" /><stop offset="1" stop-color="#6d6d6d" /></linearGradient>
              <linearGradient id="bore1" gradientUnits="userSpaceOnUse" x1="252" y1="301" x2="280" y2="236"><stop offset="0" stop-color="#777" /><stop offset=".25" stop-color="#ddd" /><stop offset=".45" stop-color="#fff" /><stop offset=".75" stop-color="#bbb" /><stop offset="1" stop-color="#858585" /></linearGradient>
              <linearGradient id="fillet1" gradientUnits="userSpaceOnUse" x1="265" y1="312" x2="276" y2="334"><stop offset="0" stop-color="#a2a2a2" /><stop offset=".5" stop-color="#d2d2d2" /><stop offset="1" stop-color="#b6b6b6" /></linearGradient>
              <linearGradient id="hole1" x1="0" x2="1"><stop offset="0" stop-color="#a2a2a2" /><stop offset=".5" stop-color="#7c7c7c" /><stop offset="1" stop-color="#b5b5b5" /></linearGradient>
            </defs>
            <g stroke="#2c343e" fill="none">
              <path d="M9 282L75 320M9 350L75 311M141 175L200 211M418 157L504 206M280 190L342 159M318 282L504 390M370 323L504 246M96 484L222 408M340 477L360 484M404 480L504 430" />
              <path d="M12 463L44 484" stroke="#4b2a33" />
            </g>
            <g stroke="#f4f4f4" stroke-linejoin="round">
              <path d="M73 290Q74 286 82 282L182 222Q187 220 193 224V340H160L82 286z" fill="#b9b9b9" />
              <path d="M87 284L189 225" fill="none" stroke="#ddd" />
              <path d="M179 270Q165 272 165 282Q167 291 179 292z" fill="url(#hole1)" />
              <path d="M109 338L123 347L108 355z" fill="#aaa" />
              <path d="M73 335V291Q74 285 82 283L167 330Q178 334 179 320V277L213 296V342Q214 356 225 363L308 411Q317 417 318 430V476L283 456V438L123 347L109 338L108 355z" fill="#989898" />
              <path d="M213 296A74 43 -60 0 1 318 236V284L213 342z" fill="#ababab" />
              <path d="M179 277A74 43 -60 0 1 269 183L303 202A74 43 -60 0 0 213 296z" fill="url(#band1)" />
              <path d="M232 187L265 206M179 277L213 296" fill="none" />
              <ellipse cx="266" cy="267" rx="35" ry="20" transform="rotate(-60 266 267)" fill="url(#bore1)" />
              <path d="M264 239L287 251M243 284L266 297" fill="none" stroke="#eee" stroke-width=".6" />
              <path d="M213 342L318 284Q319 298 330 303L225 363Q214 356 213 342z" fill="url(#fillet1)" stroke="none" />
              <path d="M213 342L318 284M225 363L330 303" fill="none" stroke="#e6e6e6" />
              <path d="M219 353L323 294" fill="none" stroke="#e6e6e6" stroke-dasharray="2 4" stroke-width=".6" />
              <path d="M225 363L330 303L411 350L308 411z" fill="#bababa" stroke="#d4d4d4" />
              <path d="M308 411L411 350Q422 357 423 372L318 430Q317 417 308 411z" fill="#c0c0c0" />
              <path d="M312 415L415 356M317 421L420 363M318 426L423 368" fill="none" stroke="#e8e8e8" />
              <path d="M318 430L423 372V415L318 476z" fill="#ababab" />
              <ellipse cx="310" cy="353" rx="21" ry="12" fill="url(#hole1)" stroke-width="1.500" />
              <path d="M318 284Q319 298 330 303L411 350Q422 357 423 372V415L318 476L283 456V438L123 347M318 284V236" fill="none" stroke="#fff" stroke-width="1.300" />
            </g>
            <g stroke-width="4" stroke-linecap="round">
              <path d="M47 446V417" stroke="#4268a2" /><path d="M47 446L73 431" stroke="#3f9a48" /><path d="M47 446L73 461" stroke="#d8636a" />
            </g>
            <g class="axis"><text x="46" y="413" fill="#2b56b0">Z</text><text x="71" y="427" fill="#2c8a34">Y</text><text x="71" y="458" fill="#b02a30">X</text></g>
            <g>
              <ellipse cx="465" cy="208" rx="26" ry="15" fill="none" stroke="#4a515a" stroke-width="6" />
              <g class="compass"><text x="441" y="222">S</text><text x="483" y="222">E</text><text class="far" x="444" y="196">W</text><text class="far" x="481" y="196">N</text></g>
              <path d="M450 188L466 178L482 186L466 194z" fill="#cfcfcf" stroke="#eee" stroke-width=".6" /><path d="M450 188L466 194V213L451 204z" fill="#c2c2c2" stroke="#eee" stroke-width=".6" /><path d="M482 186L466 194V213L481 204z" fill="#acacac" stroke="#eee" stroke-width=".6" />
              <g class="face"><text x="452" y="202">FRONT</text><text x="468" y="203">RIGHT</text><text x="461" y="188">TOP</text></g>
            </g>
          </svg>
          <div class="vp-label">[&minus;][SE Isometric][Shaded with edges]</div>
          <button class="ucs-menu wcs">WCS <span>&#9662;</span></button>
          <div class="navbar">
            <i class="dot"></i>
            <button aria-label="Wheel"><svg><use href="#n-wheel" /></svg></button>
            <svg class="tiny"><use href="#arrow" /></svg>
            <button class="ruled" aria-label="Pan"><svg><use href="#n-hand" /></svg></button>
            <button class="picked" aria-label="Zoom extents"><svg><use href="#zoomx" /></svg><svg class="tiny"><use href="#arrow" /></svg></button>
            <button aria-label="Orbit"><svg><use href="#n-orbit" /></svg></button>
            <svg class="tiny"><use href="#arrow" /></svg>
            <button class="ruled" aria-label="ShowMotion"><svg><use href="#motion" /></svg></button>
            <i class="dot last"></i>
          </div>
        </div>
        <div class="layouts">
          <button class="step" aria-label="First"><svg viewBox="0 0 8 8"><path d="M1 1h1v6H1zM7 1v6L3 4z" fill="#444" /></svg></button>
          <button class="step" aria-label="Previous"><svg viewBox="0 0 8 8"><path d="M6 1v6L2 4z" fill="#444" /></svg></button>
          <button class="step" aria-label="Next"><svg viewBox="0 0 8 8"><path d="M2 1v6l4-3z" fill="#444" /></svg></button>
          <button class="step" aria-label="Last"><svg viewBox="0 0 8 8"><path d="M1 1v6l4-3zM6 1h1v6H6z" fill="#444" /></svg></button>
          <button class="layout current">Model</button><button class="layout">Layout1</button><button class="layout">Layout2</button>
        </div>
      </section>

      <section class="window focused">
        <div class="win-title">
          <svg class="ico"><use href="#dwg" /></svg>
          <span>EX 3D - 3.dwg</span>
          <button aria-label="Minimize"><svg viewBox="0 0 10 10"><path d="M1 5h8v3H1z" fill="#fff" stroke="#667" /></svg></button>
          <button aria-label="Maximize"><svg viewBox="0 0 10 10"><path d="M1 1h8v7H1zM4 4h2v1H4z" fill="#fff" stroke="#667" /></svg></button>
          <button class="x" aria-label="Close"><svg viewBox="0 0 10 10"><path d="M1 1l8 7M9 1L1 8" stroke="#8b3a30" stroke-width="3" /><path d="M1 1l8 7M9 1L1 8" stroke="#fff" stroke-width="2" /></svg></button>
        </div>
        <div class="canvas">
          <svg class="scene" viewBox="519 157 496 327" preserveAspectRatio="xMidYMid slice">
            <defs>
              <linearGradient id="band2" gradientUnits="userSpaceOnUse" x1="655" y1="296" x2="750" y2="190"><stop offset="0" stop-color="#808080" /><stop offset=".2" stop-color="#c4c4c4" /><stop offset=".45" stop-color="#fff" /><stop offset=".65" stop-color="#d5d5d5" /><stop offset="1" stop-color="#686868" /></linearGradient>
            </defs>
            <g stroke="#f4f4f4" stroke-linejoin="round">
              <path d="M829 341L882 371V406L838 431L760 390z" fill="#b9b9b9" />
              <path d="M676 295A73 42 -60 0 1 780 235V360L713 351L676 372z" fill="#a9a9a9" stroke="none" />
              <path d="M676 295A73 42 -60 0 1 780 235V270" fill="none" />
              <path d="M646 278A73 42 -60 0 1 735 184L765 201A73 42 -60 0 0 676 295z" fill="url(#band2)" />
              <path d="M699 189L727 206" fill="none" />
              <path d="M646 278L676 295V372L779 431V466L646 389z" fill="#989898" />
              <path d="M676 372L713 351L844 426L838 431H779z" fill="#bababa" stroke="#e4e4e4" />
              <path d="M713 233L844 426L713 351z" fill="#949494" stroke="#ddd" />
              <path d="M713 233L743 215L875 410L844 427z" fill="#bababa" stroke="#e8e8e8" />
              <path d="M779 431H838V466H779z" fill="#8c8c8c" />
              <path d="M838 431L882 406V440L838 466z" fill="#a9a9a9" stroke="#ddd" />
              <path d="M743 215L875 410M829 341L882 371V440L838 466H779L646 389V278" fill="none" stroke="#fff" stroke-width="1.300" />
            </g>
            <path d="M758 159L732 174" stroke="#3c4f9c" /><path d="M758 159L785 174" stroke="#a5444c" /><path d="M758 159V174" stroke="#4c9a50" /><path d="M756 158h4v3h-4z" fill="none" stroke="#ccc" />
            <g stroke-width="4" stroke-linecap="round">
              <path d="M557 446V417" stroke="#3f8a42" /><path d="M557 446L532 461" stroke="#3c66c4" /><path d="M557 446L583 461" stroke="#d8636a" />
            </g>
            <g class="axis"><text x="556" y="413" fill="#2c8a34">Y</text><text x="529" y="458" fill="#2b56b0">Z</text><text x="582" y="458" fill="#b02a30">X</text></g>
            <g>
              <ellipse cx="975" cy="208" rx="26" ry="15" fill="none" stroke="#4a515a" stroke-width="6" />
              <g class="compass"><text x="951" y="222">S</text><text x="993" y="222">E</text><text class="far" x="954" y="196">W</text><text class="far" x="991" y="196">N</text></g>
              <path d="M960 188L976 178L992 186L976 194z" fill="#cfcfcf" stroke="#eee" stroke-width=".6" /><path d="M960 188L976 194V213L961 204z" fill="#c2c2c2" stroke="#eee" stroke-width=".6" /><path d="M992 186L976 194V213L991 204z" fill="#acacac" stroke="#eee" stroke-width=".6" />
              <g class="face"><text x="964" y="202">TOP</text><text x="978" y="203">RIGHT</text><text x="970" y="188">LEFT</text></g>
            </g>
          </svg>
          <div class="vp-label">[&minus;][SE Isometric][Shaded with edges]</div>
          <button class="ucs-menu">Unnamed <span>&#9662;</span></button>
          <div class="navbar faded">
            <i class="dot"></i>
            <button aria-label="Wheel"><svg><use href="#n-wheel" /></svg></button>
            <svg class="tiny"><use href="#arrow" /></svg>
            <button class="ruled" aria-label="Pan"><svg><use href="#n-hand" /></svg></button>
            <button class="zoom" aria-label="Zoom extents"><svg><use href="#n-zoom" /></svg><svg class="tiny"><use href="#arrow" /></svg></button>
            <button aria-label="Orbit"><svg><use href="#n-orbit" /></svg></button>
            <svg class="tiny"><use href="#arrow" /></svg>
            <button class="ruled" aria-label="ShowMotion"><svg><use href="#motion" /></svg></button>
            <i class="dot last"></i>
          </div>
        </div>
        <div class="layouts">
          <button class="step" aria-label="First"><svg viewBox="0 0 8 8"><path d="M1 1h1v6H1zM7 1v6L3 4z" fill="#444" /></svg></button>
          <button class="step" aria-label="Previous"><svg viewBox="0 0 8 8"><path d="M6 1v6L2 4z" fill="#444" /></svg></button>
          <button class="step" aria-label="Next"><svg viewBox="0 0 8 8"><path d="M2 1v6l4-3z" fill="#444" /></svg></button>
          <button class="step" aria-label="Last"><svg viewBox="0 0 8 8"><path d="M1 1v6l4-3zM6 1h1v6H6z" fill="#444" /></svg></button>
          <button class="layout current">Model</button><button class="layout">Layout1</button><button class="layout">Layout2</button>
        </div>
      </section>
    </main>

    <section class="command">
      <div class="cmd-side">
        <i class="grip"></i>
        <button aria-label="Close command line"><svg><use href="#close" /></svg></button>
        <button aria-label="Customize"><svg><use href="#wrench" /></svg></button>
      </div>
      <div class="cmd-main">
        <div class="history"><p>Command:</p><p>Command: _open</p></div>
        <div class="prompt"><i>&gt;_</i><svg class="tiny"><use href="#arrow" /></svg><input type="text" aria-label="Command" placeholder="Type a command" /></div>
      </div>
    </section>

    <footer class="status">
      <span class="coords">-48.0708, &nbsp;37.6917 , 0.0000</span>
      <div class="toggles">
        <button aria-label="Infer"><svg><use href="#s-infer" /></svg></button>
        <button aria-label="Snap"><svg><use href="#s-snap" /></svg></button>
        <button aria-label="Grid"><svg><use href="#s-grid" /></svg></button>
        <button class="on" aria-label="Ortho"><svg><use href="#s-ortho" /></svg></button>
        <button aria-label="Polar"><svg><use href="#s-polar" /></svg></button>
        <button class="on" aria-label="Object snap"><svg><use href="#s-osnap" /></svg></button>
        <button aria-label="3D object snap"><svg><use href="#s-3dosnap" /></svg></button>
        <button class="on" aria-label="Tracking"><svg><use href="#s-otrack" /></svg></button>
        <button class="on" aria-label="Dynamic UCS"><svg><use href="#s-ducs" /></svg></button>
        <button class="on" aria-label="Dynamic input"><svg><use href="#s-dyn" /></svg></button>
        <button aria-label="Lineweight"><svg><use href="#s-lwt" /></svg></button>
        <button class="on" aria-label="Transparency"><svg><use href="#s-tpy" /></svg></button>
        <button aria-label="Quick properties"><svg><use href="#s-qp" /></svg></button>
        <button aria-label="Selection cycling"><svg><use href="#s-sc" /></svg></button>
        <button aria-label="Annotation monitor"><svg><use href="#s-am" /></svg></button>
      </div>
      <div class="toggles right">
        <button class="text">MODEL</button>
        <button aria-label="Quick view layouts"><svg><use href="#s-paper" /></svg></button>
        <button aria-label="Quick view drawings"><svg><use href="#s-qv" /></svg></button>
        <button class="text gap"><svg><use href="#s-anno" /></svg>1:1<svg class="caret"><use href="#arrow" /></svg></button>
        <button aria-label="Annotation visibility"><svg><use href="#s-annostar" /></svg></button>
        <button aria-label="Auto scale"><svg><use href="#s-annooff" /></svg></button>
        <button class="gap" aria-label="Workspace switching"><svg><use href="#gear" /></svg></button>
        <button aria-label="Lock"><svg><use href="#s-lock" /></svg></button>
        <button aria-label="Hardware acceleration"><svg><use href="#s-hw" /></svg></button>
        <button class="lit" aria-label="Isolate objects"><svg><use href="#s-iso" /></svg><svg><use href="#s-bulb" /></svg></button>
        <svg class="caret"><use href="#arrow" /></svg>
        <button aria-label="Clean screen"><svg><use href="#s-clean" /></svg></button>
      </div>
    </footer>
  </body>
</html>
```

FILE: styles.css
```css
* {
  box-sizing: border-box;
}

body {
  margin: 0;
  height: 100vh;
  display: flex;
  flex-direction: column;
  overflow: hidden;
  background: #6b6866;
  color: #444;
  font-family: Roboto, "Open Sans", sans-serif;
  font-size: 9px;
  line-height: 11px;
}

button,
input,
select {
  margin: 0;
  padding: 0;
  border: 0;
  background: none;
  color: inherit;
  font: inherit;
}

select {
  appearance: none;
  flex: 1;
  min-width: 0;
  outline: none;
}

svg {
  display: block;
  flex: none;
}

p {
  margin: 0;
}

.sprite {
  position: absolute;
  width: 0;
  height: 0;
}

.ico {
  width: 14px;
  height: 14px;
}

.tiny {
  width: 4px;
  height: 4px;
}

.caret {
  width: 7px;
  height: 7px;
}

.side {
  transform: rotate(-90deg);
}

.flip {
  transform: rotate(180deg);
}

/* Title bar and menu */
.top {
  display: grid;
  grid-template-columns: 30px 1fr;
  grid-template-rows: 17px 16px;
  background: #424242;
}

.app-btn {
  grid-row: 1 / 3;
  height: 30px;
  display: flex;
  align-items: center;
  justify-content: center;
  gap: 2px;
  border: 1px solid #777;
  background: linear-gradient(#d0d0d0, #8c8c8c);
  color: #222;
}

.app-logo {
  width: 20px;
  height: 20px;
}

.titlebar {
  display: flex;
  align-items: center;
  background: linear-gradient(#757575, #8e8e8e);
  color: #222;
}

.qat {
  display: flex;
  align-items: center;
  gap: 4px;
  padding-left: 6px;
  width: 149px;
}

.qat svg:not(.tiny) {
  width: 14px;
  height: 14px;
}

.workspace-pick {
  display: flex;
  align-items: center;
  gap: 1px;
  width: 134px;
  height: 15px;
  margin-right: 3px;
  padding: 0 3px 0 1px;
  border: 1px solid #666;
  background: linear-gradient(#fafafa, #d4d4d4);
}

.workspace-pick .ico {
  width: 13px;
  height: 13px;
}

.app-title {
  flex: 1;
  display: flex;
  justify-content: center;
  gap: 10px;
  color: #eee;
}

.search {
  width: 134px;
  height: 15px;
  margin-left: 2px;
  padding: 0 2px;
  background: #f7f7f7;
}

.search::placeholder {
  color: #777;
  font-style: italic;
}

.info {
  display: flex;
  align-items: center;
  gap: 6px;
  width: 188px;
  padding-left: 4px;
  color: #444;
}

.info svg:not(.tiny) {
  width: 12px;
  height: 12px;
}

.signin {
  display: flex;
  align-items: center;
  gap: 4px;
  margin-right: 28px;
  color: #eee;
  white-space: nowrap;
}

.help {
  width: 11px;
  height: 11px;
  margin-left: 8px;
  border-radius: 50%;
  background: #e9eefb;
  color: #2743a8;
  font-weight: bold;
}

.sys {
  display: flex;
  gap: 4px;
  width: 50px;
  padding-right: 2px;
  justify-content: flex-end;
  color: #2d2d2d;
}

.sys svg {
  width: 9px;
  height: 9px;
}

.menu {
  display: flex;
  align-items: flex-end;
  padding-left: 4px;
  background: #424242;
  color: #e6e6e6;
}

.menu button {
  height: 14px;
  padding: 0 8px 0 7px;
  white-space: nowrap;
}

.menu .active {
  height: 13px;
  background: linear-gradient(#d9d9d9, #f4f4f4);
  color: #444;
}

.menu .cam {
  display: flex;
  align-items: center;
  gap: 5px;
  padding-left: 16px;
}

.cam i {
  width: 10px;
  height: 5px;
  border-radius: 1px;
  background: radial-gradient(#424242 1px, #eee 2px);
}

/* Ribbon */
.ribbon {
  display: flex;
  height: 74px;
  padding-right: 8px;
  background: #9b9b9b;
}

.panel {
  display: flex;
  flex-direction: column;
  min-width: 0;
  border-right: 1px solid #c4c4c4;
  background: #fcfcfc;
}

.p-nav {
  flex: 92 1 0;
}

.p-views {
  flex: 142 1 0;
}

.p-coord {
  flex: 108 1 0;
}

.p-style {
  flex: 154 1 0;
}

.p-vports {
  flex: 98 1 0;
}

.p-pal {
  flex: 206 1 0;
}

.p-ui {
  flex: 216 1 0;
}

.panel-body {
  flex: 1;
  display: flex;
  gap: 3px;
  padding: 4px 2px 2px 3px;
}

.panel-body.column {
  flex-direction: column;
}

.panel-title {
  display: flex;
  align-items: center;
  justify-content: center;
  gap: 4px;
  position: relative;
  height: 14px;
  border-top: 1px solid #dcdcdc;
  background: #efefef;
  color: #555;
}

.launch {
  position: absolute;
  right: 2px;
  font-size: 8px;
  font-style: normal;
}

.big {
  position: relative;
  display: flex;
  flex-direction: column;
  align-items: center;
  flex: 1 1 auto;
  padding: 2px 0 0;
  border: 1px solid transparent;
  white-space: nowrap;
  color: #4a4a4a;
}

.big > svg:not(.tiny) {
  width: 24px;
  height: 24px;
  margin-bottom: 3px;
}

.with-caret .tiny {
  position: absolute;
  right: 0;
  bottom: 10px;
}

.big.on {
  border-color: #6ea5d3;
  background: linear-gradient(#b3d4ef, #a9cff0);
}

.p-pal .panel-body {
  gap: 0;
}

.p-pal .big {
  border: 0;
  padding-top: 3px;
}

.stack {
  display: grid;
  grid-auto-rows: 16px;
  align-content: start;
  gap: 2px;
}

.sm {
  display: flex;
  align-items: center;
  justify-content: center;
  gap: 4px;
  width: 17px;
  height: 16px;
  border: 1px solid #dedede;
  background: #fafafa;
  color: #333;
}

.sm.split {
  width: 26px;
}

.sm.on {
  border-color: #6ea5d3;
  background: #a9cff0;
}

.line {
  display: flex;
  align-items: center;
  gap: 2px;
}

.p-nav .stack {
  margin-right: 4px;
}

.view-list {
  display: flex;
  flex: none;
  width: 92px;
  height: 48px;
  border: 1px solid #dedede;
}

.view-items {
  flex: 1;
  display: grid;
  align-items: center;
}

.view-items button {
  display: flex;
  align-items: center;
  gap: 1px;
}

.view-scroll {
  display: grid;
  width: 11px;
  border-left: 1px solid #dedede;
}

.view-scroll button {
  display: grid;
  place-items: center;
  border-bottom: 1px solid #dedede;
}

.coord-grid {
  display: grid;
  grid-template-columns: repeat(4, 1fr);
  grid-auto-rows: 16px;
  align-content: start;
  flex: 1;
  gap: 2px 1px;
}

.coord-grid .pick {
  grid-column: 1 / 5;
}

.pick {
  display: flex;
  align-items: center;
  gap: 2px;
  height: 16px;
  padding: 0 3px;
  border: 1px solid #dedede;
  background: #fafafa;
}

.p-style .panel-body {
  gap: 2px;
}

.style-row {
  display: flex;
}

.style-row .sm {
  flex: 26 1 0;
  gap: 3px;
}

.style-row .sm:not(.split) {
  flex-grow: 18;
}

.opacity-row {
  display: flex;
  gap: 3px;
}

.opacity {
  position: relative;
  flex: 1;
}

.opacity label {
  position: absolute;
  left: 4px;
  top: 3px;
  color: #cfcfcf;
}

.opacity input {
  display: block;
  width: 100%;
  height: 16px;
  appearance: none;
  border: 1px solid #eee;
  background: linear-gradient(90deg, #f1f1f1 60%, #fff 60%);
}

.opacity input::-webkit-slider-thumb {
  appearance: none;
  width: 0;
}

.opacity-val {
  width: 20px;
  border: 1px solid #eee;
  color: #bbb;
  text-align: center;
}

.pair {
  display: grid;
  flex: none;
  grid-template-columns: 17px 17px;
  grid-auto-rows: 16px;
  align-content: start;
  gap: 2px 1px;
}

.pair.ruled {
  margin-left: 4px;
  padding-left: 4px;
  border-left: 1px solid #e2e2e2;
}

.rule {
  width: 1px;
  margin-left: 4px;
  background: #e2e2e2;
}

/* Drawing file tabs */
.file-tabs {
  display: flex;
  align-items: flex-end;
  height: 22px;
  padding: 0 18px 2px;
  background: linear-gradient(#888, #a3a3a3);
  border-bottom: 1px solid #666;
}

.file-tab {
  position: relative;
  display: flex;
  align-items: center;
  justify-content: space-between;
  width: 91px;
  height: 15px;
  padding: 0 8px 0 6px;
  color: #666;
  z-index: 0;
}

.file-tab::before {
  content: "";
  position: absolute;
  inset: 0 3px 0 -1px;
  z-index: -1;
  border-radius: 5px 7px 0 0;
  background: linear-gradient(#aaa, #9c9c9c);
  transform: skewX(-14deg);
}

.file-tab.active {
  color: #333;
}

.file-tab.active::before {
  inset: 0 -3px 0 -1px;
  background: linear-gradient(#cecece, #b5b5b5);
}

.file-tab svg {
  width: 6px;
  height: 6px;
  color: #888;
}

.new-tab {
  margin-left: 5px;
}

.new-tab svg {
  width: 18px;
  height: 12px;
}

/* Drawing windows */
.mdi {
  flex: 1;
  display: grid;
  grid-template-columns: 1fr 1fr;
  gap: 1px;
  min-height: 0;
  padding: 4px 2px 2px;
  background: #55565a;
}

.window {
  display: flex;
  flex-direction: column;
  min-width: 0;
  padding: 0 6px 7px;
  border: 1px solid #f1f5fa;
  border-radius: 4px 4px 0 0;
  background: #d3e0ed;
}

.window.focused {
  background: #b0cce6;
}

.win-title {
  display: flex;
  align-items: center;
  gap: 3px;
  height: 23px;
  margin: 0 -6px;
  padding: 3px 6px 0 7px;
  background: linear-gradient(#b4c8de, #d7e3ef);
  color: #5b6470;
}

.focused .win-title {
  background: linear-gradient(#89b0d9, #b5cfe9);
  color: #2d3744;
}

.win-title span {
  flex: 1;
}

.win-title .ico {
  width: 12px;
  height: 12px;
}

.win-title button {
  display: grid;
  place-items: center;
  width: 22px;
  height: 12px;
  border: 1px solid #8fa5bf;
  border-radius: 1px;
  background: linear-gradient(#dbe6f2, #c0d2e5);
}

.win-title button svg {
  width: 8px;
  height: 8px;
}

.win-title .x {
  border-color: #7a3a38;
  background: linear-gradient(#e49a8a, #c2402c 50%, #d1603f);
}

.canvas {
  position: relative;
  flex: 1;
  min-height: 0;
  background: #212830;
  border-top: 1px solid #5a6570;
}

.scene {
  position: absolute;
  width: 100%;
  height: 100%;
}

.axis {
  font: 12px "Liberation Sans", sans-serif;
}

.compass {
  fill: #bcbfc3;
  font: bold 8px "Liberation Sans", sans-serif;
}

.compass .far {
  font-size: 6px;
}

.face {
  fill: #555;
  font: bold 4px "Liberation Sans", sans-serif;
}

.vp-label {
  position: absolute;
  left: 3px;
  top: 4px;
  color: #eee;
  white-space: nowrap;
}

.ucs-menu {
  position: absolute;
  right: 14px;
  top: 78px;
  width: 51px;
  height: 13px;
  padding: 0 3px;
  border: 1px solid #80868e;
  border-radius: 3px;
  background: #a5a8b0;
  color: #666a72;
  font: 8px "Liberation Sans", sans-serif;
  text-align: left;
  white-space: nowrap;
}

.ucs-menu.wcs {
  right: 21px;
  width: 36px;
}

.navbar {
  position: absolute;
  right: 3px;
  top: 110px;
  display: flex;
  flex-direction: column;
  align-items: center;
  width: 24px;
  height: 161px;
  padding: 2px 1px;
  border-radius: 3px;
  background: #949597;
  color: #444;
}

.navbar.faded {
  background: #575d64;
  color: #3f454c;
}

.navbar button {
  display: flex;
  flex-direction: column;
  align-items: center;
  width: 20px;
  padding: 3px 0;
}

.navbar button svg:not(.tiny) {
  width: 17px;
  height: 17px;
}

.navbar button.ruled {
  margin-top: 3px;
  border-top: 1px solid #77797c;
}

.navbar.faded button.ruled {
  border-color: #4e545b;
}

.navbar .picked {
  width: 22px;
  border: 1px solid #4f93cf;
  background: #a9d2f5;
  padding: 2px 0;
}

.navbar .picked .tiny,
.navbar .zoom .tiny {
  margin-top: 3px;
}

.navbar > button:nth-of-type(1) {
  margin-top: 2px;
}

.navbar .dot {
  align-self: flex-end;
  width: 5px;
  height: 5px;
  border: 1px solid;
  border-radius: 50%;
}

.navbar .last {
  margin-top: auto;
}

.layouts {
  display: flex;
  height: 12px;
  background: #f0f0f0;
  color: #222;
}

.step {
  display: grid;
  place-items: center;
  width: 12px;
  border-right: 1px solid #bbb;
}

.step svg {
  width: 8px;
  height: 8px;
}

.layout {
  position: relative;
  width: 41px;
  padding: 0 2px 0 0;
}

.layout::after {
  content: "";
  position: absolute;
  top: 0;
  right: 0;
  width: 1px;
  height: 11px;
  background: #444;
  transform: skewX(-24deg);
}

.layout.current {
  width: 37px;
  padding: 0;
  background: #212830;
  color: #fff;
  clip-path: polygon(0 0, 100% 0, 92% 100%, 8% 100%);
}

/* Command line */
.command {
  display: flex;
  height: 53px;
  border-top: 4px solid #706b69;
}

.cmd-side {
  display: flex;
  flex-direction: column;
  align-items: center;
  gap: 7px;
  width: 17px;
  padding-top: 3px;
  background: linear-gradient(#888, #4a4a4a);
  color: #eee;
}

.grip {
  width: 13px;
  height: 4px;
  background: repeating-linear-gradient(90deg, #aaa 0 1px, #777 1px 2px);
}

.cmd-side svg {
  width: 8px;
  height: 8px;
}

.cmd-side button:last-child svg {
  width: 11px;
  height: 11px;
}

.cmd-main {
  flex: 1;
  display: flex;
  flex-direction: column;
  font-family: "DejaVu Sans Mono", monospace;
}

.history {
  flex: 1;
  padding: 9px 2px 0;
  background: #c7c7c7;
  color: #333;
}

.prompt {
  display: flex;
  align-items: center;
  gap: 3px;
  height: 17px;
  padding-left: 4px;
  background: #fff;
}

.prompt i {
  width: 11px;
  height: 10px;
  border: 1px solid #9ab;
  background: #e4e9ef;
  font-size: 7px;
  font-style: normal;
  line-height: 7px;
}

.prompt input {
  flex: 1;
  padding-left: 2px;
}

.prompt input::placeholder {
  color: #999;
  font-style: italic;
}

/* Status bar */
.status {
  display: flex;
  align-items: stretch;
  height: 18px;
  border-top: 2px solid #5c5a59;
  background: linear-gradient(#7b7b7b, #999);
  color: #222;
  font-family: "Liberation Sans", sans-serif;
  font-size: 8px;
}

.coords {
  width: 134px;
  padding: 3px 0 0 9px;
}

.toggles {
  display: flex;
  align-items: stretch;
}

.toggles button {
  display: flex;
  align-items: center;
  justify-content: center;
  min-width: 16px;
  border-right: 1px solid #8a8a8a;
  background: #adadad;
}

.toggles:not(.right) button {
  width: 17px;
  min-width: 0;
  flex: none;
}

.toggles button svg:not(.caret) {
  width: 13px;
  height: 13px;
}

.toggles .on {
  background: linear-gradient(#c7e6ef, #8fc5d8);
}

.toggles.right {
  margin-left: auto;
  padding-right: 2px;
}

.toggles.right > .caret {
  align-self: center;
  margin: 0 2px;
}

.toggles .text {
  gap: 3px;
  padding: 0 2px;
}

.toggles .gap {
  margin-left: 6px;
}

.toggles .lit {
  gap: 3px;
  margin-left: 2px;
  padding: 0 1px;
  border: 1px solid #555;
}
```
